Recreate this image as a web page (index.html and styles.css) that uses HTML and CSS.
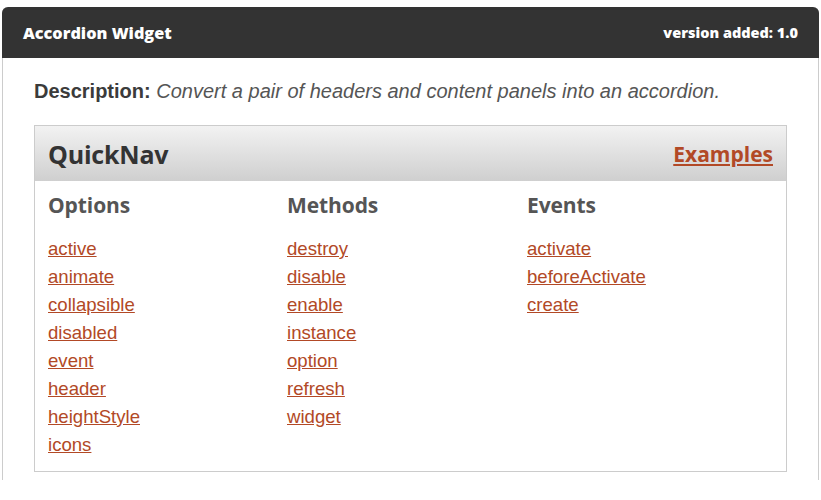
FILE: index.html
```html
<!DOCTYPE html>
<html lang="en">

<head>
    <meta charset="UTF-8">
    <meta name="viewport" content="width=device-width, initial-scale=1.0">
    <title>Accordion Widget</title>
    <link rel="stylesheet" href="styles.css">
</head>

<body>
    <div class="entry">
        <div class="entry-header">
            <h2>Accordion Widget</h2>
            <span class="version">version added: 1.0</span>
        </div>
        <div class="entry-body">
            <p class="desc"><strong>Description:</strong> <span>Convert a pair of headers and content panels into an accordion.</span></p>

            <div class="quicknav">
                <div class="quicknav-head">
                    <h2>QuickNav</h2>
                    <a href="#examples">Examples</a>
                </div>
                <div class="quicknav-cols">
                    <div class="col">
                        <h3>Options</h3>
                        <a href="#">active</a>
                        <a href="#">animate</a>
                        <a href="#">collapsible</a>
                        <a href="#">disabled</a>
                        <a href="#">event</a>
                        <a href="#">header</a>
                        <a href="#">heightStyle</a>
                        <a href="#">icons</a>
                    </div>
                    <div class="col">
                        <h3>Methods</h3>
                        <a href="#">destroy</a>
                        <a href="#">disable</a>
                        <a href="#">enable</a>
                        <a href="#">instance</a>
                        <a href="#">option</a>
                        <a href="#">refresh</a>
                        <a href="#">widget</a>
                    </div>
                    <div class="col">
                        <h3>Events</h3>
                        <a href="#">activate</a>
                        <a href="#">beforeActivate</a>
                        <a href="#">create</a>
                    </div>
                </div>
            </div>
        </div>
    </div>
</body>

</html>
```

FILE: styles.css
```css
* {
    padding: 0;
    margin: 0;
    box-sizing: border-box;
}

body {
    background: #fff;
    font-family: "Liberation Sans", Arial, sans-serif;
    padding: 7px 2px 0 2px;
}

.entry {
    width: 817px;
    height: 473px;
    border: 1px solid #ccc;
    border-top: none;
    border-bottom: none;
    border-radius: 6px 6px 0 0;
}

.entry-header {
    background: #333;
    color: #fff;
    height: 51px;
    margin: 0 -1px;
    border-radius: 6px 6px 0 0;
    display: flex;
    align-items: center;
    justify-content: space-between;
    padding: 0 21px 0 21px;
}

.entry-header h2 {
    font-family: "Open Sans", sans-serif;
    font-weight: 800;
    font-size: 16.3px;
    letter-spacing: 0;
}

.entry-header .version {
    font-family: "Open Sans", sans-serif;
    font-weight: 800;
    font-size: 14.5px;
    letter-spacing: 0;
}

.entry-body {
    padding: 22px 31px 0 31px;
}

.desc {
    font-size: 20px;
    color: #444;
    margin-bottom: 22px;
}

.desc strong {
    color: #3b3b3b;
}

.desc span {
    font-style: italic;
    color: #555;
}

.quicknav {
    width: 753px;
    border: 1px solid #ccc;
    padding-bottom: 12px;
}

.quicknav-head {
    height: 55px;
    background: linear-gradient(#f2f2f2, #cfcfcf);
    display: flex;
    align-items: center;
    justify-content: space-between;
    padding: 0 13px 0 13px;
}

.quicknav-head h2 {
    font-family: "Open Sans", sans-serif;
    font-weight: 700;
    font-size: 25px;
    color: #333;
    letter-spacing: -0.2px;
}

.quicknav-head a {
    font-family: "Open Sans", sans-serif;
    font-weight: 700;
    font-size: 21px;
    color: #b24926;
    letter-spacing: 0;
}

.quicknav-cols {
    display: grid;
    grid-template-columns: 239px 240px 1fr;
    padding: 9px 13px 0 13px;
}

.col {
    display: flex;
    flex-direction: column;
    align-items: flex-start;
}

.col h3 {
    font-family: "Open Sans", sans-serif;
    font-weight: 700;
    font-size: 21px;
    color: #555;
    letter-spacing: -0.1px;
    line-height: 30px;
    margin-bottom: 15px;
}

.col a {
    font-size: 18.6px;
    line-height: 28px;
    color: #b24926;
}
```
